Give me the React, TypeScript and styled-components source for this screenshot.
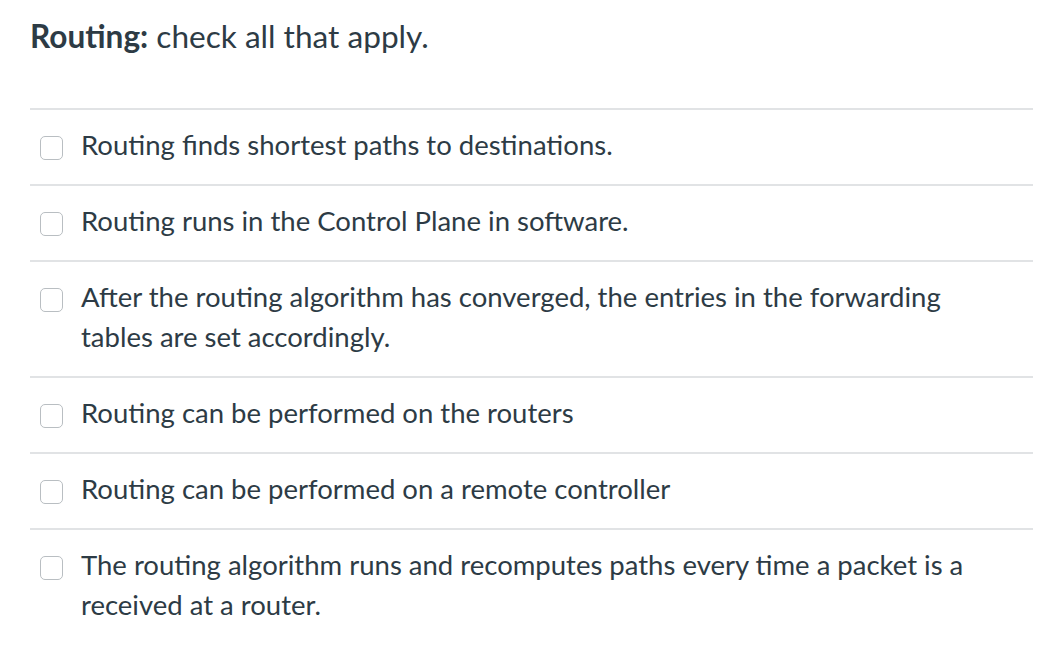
import styled, { createGlobalStyle } from "styled-components";

const GlobalStyle = createGlobalStyle`
  body {
    margin: 0;
    background: #ffffff;
    font-family: Lato, "Open Sans", sans-serif;
    color: #2d3b45;
  }
  * { box-sizing: border-box; }
`;

const Page = styled.div`
  padding: 13px 7px 0 30px;
`;

const Title = styled.h2`
  margin: 0;
  font-size: 31.6px;
  font-weight: 400;
  line-height: 46px;
  padding-bottom: 49px;
  border-bottom: 2px solid #e1e3e5;

  & strong {
    font-weight: 700;
  }
`;

const Answers = styled.ul`
  list-style: none;
  margin: 0;
  padding: 0;
`;

const Answer = styled.li`
  display: flex;
  align-items: flex-start;
  gap: 18px;
  padding: 15px 0 19px 10px;
  border-bottom: 2px solid #e1e3e5;

  &:last-child {
    border-bottom: none;
  }
`;

const Box = styled.span`
  flex: none;
  width: 23px;
  height: 24px;
  margin-top: 11px;
  border: 1.5px solid #b9bec2;
  border-radius: 5px;
  background: #ffffff;
`;

const Label = styled.span`
  font-size: 27.5px;
  line-height: 40px;
  max-width: 920px;
`;

const answers = [
  "Routing finds shortest paths to destinations.",
  "Routing runs in the Control Plane in software.",
  "After the routing algorithm has converged, the entries in the forwarding tables are set accordingly.",
  "Routing can be performed on the routers",
  "Routing can be performed on a remote controller",
  "The routing algorithm runs and recomputes paths every time a packet is a received at a router.",
];

export default function App() {
  return (
    <>
      <GlobalStyle />
      <Page>
        <Title>
          <strong>Routing:</strong> check all that apply.
        </Title>
        <Answers>
          {answers.map((a) => (
            <Answer key={a}>
              <Box />
              <Label>{a}</Label>
            </Answer>
          ))}
        </Answers>
      </Page>
    </>
  );
}
